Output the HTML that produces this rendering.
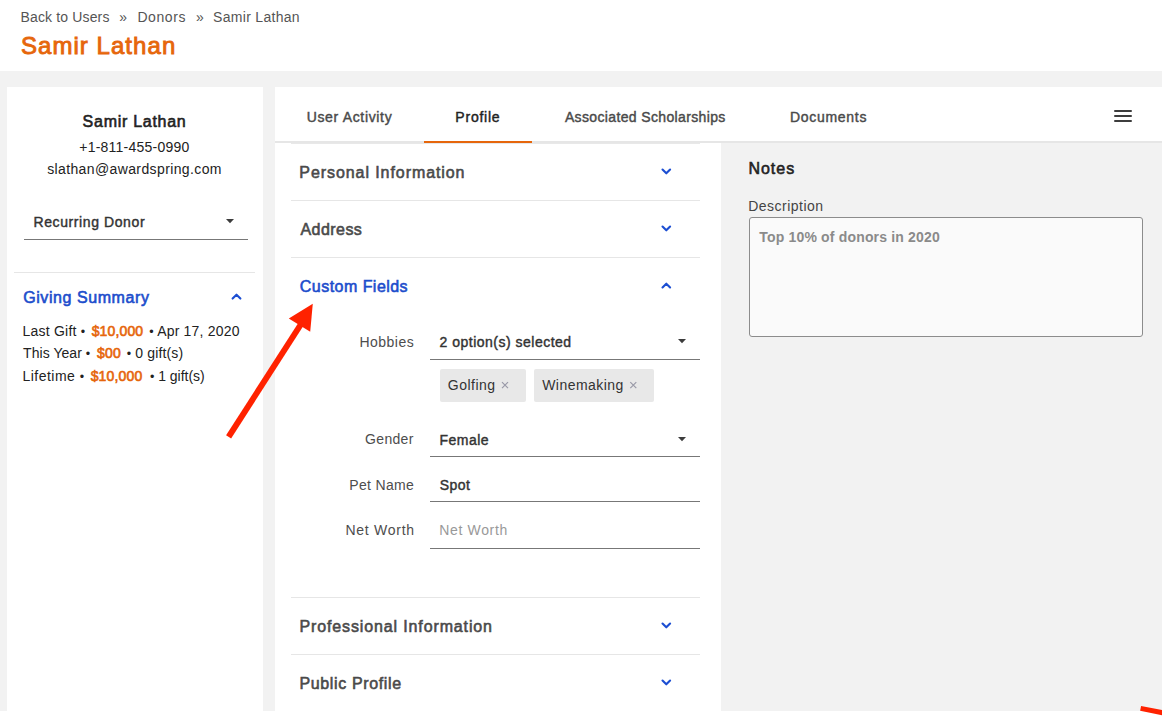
<!DOCTYPE html>
<html><head><meta charset="utf-8"><style>
*{margin:0;padding:0;box-sizing:border-box}
html,body{width:1162px;height:728px;overflow:hidden;background:#fff;font-family:"Liberation Sans",sans-serif}
.t{position:absolute;white-space:nowrap;line-height:1}
.bl{display:inline-block;width:0;height:0;vertical-align:baseline}
.r{position:absolute}
.b{font-size:12.5px;position:relative;top:-0.5px}
</style></head><body>

<div class="r" style="left:0;top:71px;width:1162px;height:640px;background:#f2f2f2"></div>
<div class="r" style="left:7px;top:87px;width:256px;height:624px;background:#fff"></div>
<div class="r" style="left:275px;top:87px;width:887px;height:624px;background:#fff"></div>
<div class="r" style="left:275px;top:141px;width:887px;height:2px;background:#e6e6e6"></div>
<div class="r" style="left:291px;top:143px;width:409px;height:1px;background:#e8e8e8"></div>
<div class="r" style="left:424px;top:141px;width:108px;height:2px;background:#e6660b"></div>
<div class="r" style="left:721px;top:143px;width:441px;height:568px;background:#f2f2f2"></div>
<!-- hamburger -->
<div class="r" style="left:1114px;top:110px;width:18px;height:2px;background:#3d3d3d;border-radius:1px"></div>
<div class="r" style="left:1114px;top:115px;width:18px;height:2px;background:#3d3d3d;border-radius:1px"></div>
<div class="r" style="left:1114px;top:120px;width:18px;height:2px;background:#3d3d3d;border-radius:1px"></div>
<!-- left card -->
<div class="r" style="left:24px;top:239px;width:224px;height:1px;background:#777"></div>
<div class="r" style="left:14px;top:272px;width:241px;height:1px;background:#e6e6e6"></div>
<!-- chips -->
<div class="r" style="left:440px;top:369px;width:86px;height:33px;background:#e8e8e8;border-radius:2px"></div>
<div class="r" style="left:534px;top:369px;width:120px;height:33px;background:#e8e8e8;border-radius:2px"></div>
<svg class="r" style="left:0;top:0" width="1162" height="728" viewBox="0 0 1162 728">
 <path d="M226 219 L234 219 L230 223.2 Z" fill="#3c3c3c"/>
 <path d="M678 339 L686 339 L682 343.2 Z" fill="#3c3c3c"/>
 <path d="M678 437 L686 437 L682 441.2 Z" fill="#3c3c3c"/>
 <g fill="none" stroke="#1c4ed2" stroke-width="2.1" stroke-linecap="round" stroke-linejoin="round">
  <path d="M232.6 298.6 L236.5 294.7 L240.4 298.6"/>
  <path d="M662.5 169.5 L666.3 173.3 L670.1 169.5"/>
  <path d="M662.5 226.5 L666.3 230.3 L670.1 226.5"/>
  <path d="M662.5 287.5 L666.3 283.7 L670.1 287.5"/>
  <path d="M662.5 623.5 L666.3 627.3 L670.1 623.5"/>
  <path d="M662.5 680.5 L666.3 684.3 L670.1 680.5"/>
 </g>
 <g stroke="#9a9aa8" stroke-width="1.2">
  <path d="M502 382.2 L508 388.2 M508 382.2 L502 388.2"/>
  <path d="M630.3 382.2 L636.3 388.2 M636.3 382.2 L630.3 388.2"/>
 </g>
</svg>
<!-- accordion separators -->
<div class="r" style="left:291px;top:200px;width:409px;height:1px;background:#e6e6e6"></div>
<div class="r" style="left:291px;top:257px;width:409px;height:1px;background:#e6e6e6"></div>
<div class="r" style="left:291px;top:597px;width:409px;height:1px;background:#e6e6e6"></div>
<div class="r" style="left:291px;top:654px;width:409px;height:1px;background:#e6e6e6"></div>
<!-- form underlines -->
<div class="r" style="left:430px;top:359px;width:270px;height:1px;background:#777"></div>
<div class="r" style="left:430px;top:456px;width:270px;height:1px;background:#777"></div>
<div class="r" style="left:430px;top:501px;width:270px;height:1px;background:#777"></div>
<div class="r" style="left:430px;top:548px;width:270px;height:1px;background:#777"></div>
<!-- textarea -->
<div class="r" style="left:749px;top:217px;width:394px;height:120px;background:#fafafa;border:1px solid #8c8c8c;border-radius:3px"></div>
<div class="t" id="bc1" style="left:20.50px;top:10px;font-size:14px;font-weight:400;color:#555;letter-spacing:0.147px">Back to Users</div>
<div class="t" id="bc2" style="left:119.34px;top:10px;font-size:14px;font-weight:400;color:#555;letter-spacing:-1.376px">&raquo;</div>
<div class="t" id="bc3" style="left:137.42px;top:10px;font-size:14px;font-weight:400;color:#555;letter-spacing:0.574px">Donors</div>
<div class="t" id="bc4" style="left:195.93px;top:10px;font-size:14px;font-weight:400;color:#555;letter-spacing:-4.820px">&raquo;</div>
<div class="t" id="bc5" style="left:213.06px;top:10px;font-size:14px;font-weight:400;color:#555;letter-spacing:0.300px">Samir Lathan</div>
<div class="t" id="title" style="left:20.94px;top:34px;font-size:24px;font-weight:400;-webkit-text-stroke:0.9px #e6660b;color:#e6660b;letter-spacing:1.050px">Samir Lathan</div>
<div class="t" id="lname" style="left:82.62px;top:114px;font-size:16px;font-weight:400;-webkit-text-stroke:0.58px #222;color:#222;letter-spacing:0.725px">Samir Lathan</div>
<div class="t" id="lphone" style="left:79.25px;top:140px;font-size:14px;font-weight:400;color:#222;letter-spacing:0.235px">+1-811-455-0990</div>
<div class="t" id="lemail" style="left:47.13px;top:162px;font-size:14px;font-weight:400;color:#222;letter-spacing:0.382px">slathan@awardspring.com</div>
<div class="t" id="lsel" style="left:33.47px;top:215px;font-size:14px;font-weight:400;-webkit-text-stroke:0.42px #333;color:#333;letter-spacing:0.598px">Recurring Donor</div>
<div class="t" id="gsum" style="left:23.17px;top:290px;font-size:16px;font-weight:400;-webkit-text-stroke:0.58px #1c4dcc;color:#1c4dcc;letter-spacing:0.576px">Giving Summary</div>
<div class="t" id="s1a" style="left:22.40px;top:324px;font-size:14px;font-weight:400;color:#222;letter-spacing:0.235px">Last Gift <span class="b">&bull;</span></div>
<div class="t" id="s1b" style="left:91.64px;top:324px;font-size:14px;font-weight:400;-webkit-text-stroke:0.6px #e6660b;color:#e6660b;letter-spacing:0.151px">$10,000</div>
<div class="t" id="s1c" style="left:149.27px;top:324px;font-size:14px;font-weight:400;color:#222;letter-spacing:0.196px"><span class="b">&bull;</span> Apr 17, 2020</div>
<div class="t" id="s2a" style="left:23.08px;top:346px;font-size:14px;font-weight:400;color:#222;letter-spacing:0.044px">This Year <span class="b">&bull;</span></div>
<div class="t" id="s2b" style="left:96.96px;top:346px;font-size:14px;font-weight:400;-webkit-text-stroke:0.6px #e6660b;color:#e6660b;letter-spacing:0.279px">$00</div>
<div class="t" id="s2c" style="left:126.64px;top:346px;font-size:14px;font-weight:400;color:#222;letter-spacing:0.156px"><span class="b">&bull;</span> 0 gift(s)</div>
<div class="t" id="s3a" style="left:22.40px;top:369px;font-size:14px;font-weight:400;color:#222;letter-spacing:0.497px">Lifetime <span class="b">&bull;</span></div>
<div class="t" id="s3b" style="left:90.64px;top:369px;font-size:14px;font-weight:400;-webkit-text-stroke:0.6px #e6660b;color:#e6660b;letter-spacing:0.173px">$10,000</div>
<div class="t" id="s3c" style="left:150.09px;top:369px;font-size:14px;font-weight:400;color:#222;letter-spacing:-0.038px"><span class="b">&bull;</span> 1 gift(s)</div>
<div class="t" id="tab1" style="left:306.65px;top:110px;font-size:14px;font-weight:400;-webkit-text-stroke:0.42px #4a4a4a;color:#4a4a4a;letter-spacing:0.667px">User Activity</div>
<div class="t" id="tab2" style="left:455.36px;top:110px;font-size:14px;font-weight:400;-webkit-text-stroke:0.42px #222;color:#222;letter-spacing:0.763px">Profile</div>
<div class="t" id="tab3" style="left:564.92px;top:110px;font-size:14px;font-weight:400;-webkit-text-stroke:0.42px #4a4a4a;color:#4a4a4a;letter-spacing:0.357px">Associated Scholarships</div>
<div class="t" id="tab4" style="left:789.94px;top:110px;font-size:14px;font-weight:400;-webkit-text-stroke:0.42px #4a4a4a;color:#4a4a4a;letter-spacing:0.704px">Documents</div>
<div class="t" id="acc1" style="left:299.36px;top:165px;font-size:16px;font-weight:400;-webkit-text-stroke:0.58px #4a4a4a;color:#4a4a4a;letter-spacing:0.922px">Personal Information</div>
<div class="t" id="acc2" style="left:300.44px;top:222px;font-size:16px;font-weight:400;-webkit-text-stroke:0.58px #4a4a4a;color:#4a4a4a;letter-spacing:0.454px">Address</div>
<div class="t" id="acc3" style="left:299.86px;top:279px;font-size:16px;font-weight:400;-webkit-text-stroke:0.58px #1c4dcc;color:#1c4dcc;letter-spacing:0.458px">Custom Fields</div>
<div class="t" id="fl1" style="left:359.50px;top:335px;font-size:14px;font-weight:400;color:#4d4d4d;letter-spacing:0.460px">Hobbies</div>
<div class="t" id="fv1" style="left:439.59px;top:335px;font-size:14px;font-weight:400;-webkit-text-stroke:0.42px #333;color:#333;letter-spacing:0.492px">2 option(s) selected</div>
<div class="t" id="chip1" style="left:447.86px;top:378px;font-size:14px;font-weight:400;color:#333;letter-spacing:0.488px">Golfing</div>
<div class="t" id="chip2" style="left:542.16px;top:378px;font-size:14px;font-weight:400;color:#333;letter-spacing:0.457px">Winemaking</div>
<div class="t" id="fl2" style="left:365.10px;top:432px;font-size:14px;font-weight:400;color:#4d4d4d;letter-spacing:0.314px">Gender</div>
<div class="t" id="fv2" style="left:439.47px;top:433px;font-size:14px;font-weight:400;-webkit-text-stroke:0.42px #333;color:#333;letter-spacing:0.485px">Female</div>
<div class="t" id="fl3" style="left:349.23px;top:478px;font-size:14px;font-weight:400;color:#4d4d4d;letter-spacing:0.341px">Pet Name</div>
<div class="t" id="fv3" style="left:439.82px;top:478px;font-size:14px;font-weight:400;-webkit-text-stroke:0.42px #333;color:#333;letter-spacing:0.418px">Spot</div>
<div class="t" id="fl4" style="left:345.42px;top:523px;font-size:14px;font-weight:400;color:#4d4d4d;letter-spacing:0.736px">Net Worth</div>
<div class="t" id="fv4" style="left:439.16px;top:523px;font-size:14px;font-weight:400;color:#999;letter-spacing:0.670px">Net Worth</div>
<div class="t" id="acc4" style="left:299.51px;top:619px;font-size:16px;font-weight:400;-webkit-text-stroke:0.58px #4a4a4a;color:#4a4a4a;letter-spacing:0.868px">Professional Information</div>
<div class="t" id="acc5" style="left:299.51px;top:676px;font-size:16px;font-weight:400;-webkit-text-stroke:0.58px #4a4a4a;color:#4a4a4a;letter-spacing:0.635px">Public Profile</div>
<div class="t" id="notes" style="left:748.40px;top:161px;font-size:16px;font-weight:400;-webkit-text-stroke:0.58px #222;color:#222;letter-spacing:0.990px">Notes</div>
<div class="t" id="desc" style="left:748.23px;top:199px;font-size:14px;font-weight:400;color:#444;letter-spacing:0.491px">Description</div>
<div class="t" id="ta" style="left:759.29px;top:230px;font-size:14px;font-weight:700;color:#8a8a8a;letter-spacing:0.173px">Top 10% of donors in 2020</div>
<svg class="r" style="left:0;top:0" width="1162" height="728" viewBox="0 0 1162 728">
 <path d="M228.6 436.8 L304 319.5" stroke="#ff2200" stroke-width="6" fill="none"/>
 <path d="M312.8 303.8 L288.8 318.6 L310.2 331.8 Z" fill="#ff2200"/>
 <path d="M1140.6 708.4 L1170 714.2" stroke="#ff2200" stroke-width="5" fill="none"/>
</svg>

</body></html>
